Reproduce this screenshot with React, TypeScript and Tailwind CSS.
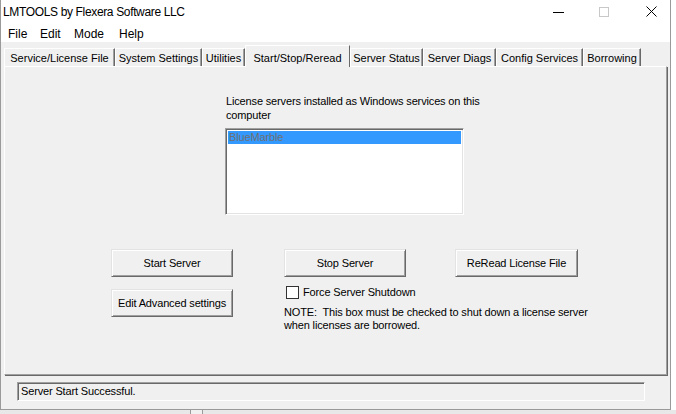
import React from "react";

const tabs: { label: string; w: string; selected?: boolean }[] = [
  { label: "Service/License File", w: "w-[111px]" },
  { label: "System Settings", w: "w-[87px]" },
  { label: "Utilities", w: "w-[43px]" },
  { label: "Start/Stop/Reread", w: "w-[105px]", selected: true },
  { label: "Server Status", w: "w-[73px]" },
  { label: "Server Diags", w: "w-[73px]" },
  { label: "Config Services", w: "w-[87px]" },
  { label: "Borrowing", w: "w-[58px]" },
];

function Btn({ children, w = "w-[122px]" }: { children: React.ReactNode; w?: string }) {
  return (
    <div
      className={`${w} h-[28px] flex items-center justify-center bg-[#f0f0f0] border-t border-l border-[#e3e3e3] border-r border-b border-r-[#696969] border-b-[#696969] shadow-[inset_1px_1px_0_#ffffff,inset_-1px_-1px_0_#a0a0a0] text-[11px] text-black`}
    >
      {children}
    </div>
  );
}

export default function App() {
  return (
    <div
      className="w-[676px] h-[414px] bg-white overflow-hidden flex flex-col"
      style={{ fontFamily: '"Liberation Sans", Arial, sans-serif' }}
    >
      <div className="w-[671px] h-[410px] shrink-0 flex flex-col border-l border-r border-b border-[#9a9a9a]">
        {/* Title bar */}
        <div className="h-[22px] bg-white flex items-center justify-between">
          <div className="pl-[2px] text-[12px] tracking-[-0.35px] text-black leading-none pt-[1px]">LMTOOLS by Flexera Software LLC</div>
          <div className="flex h-full items-center mr-[-3px]">
            <div className="w-[46px] h-full flex items-center justify-center">
              <div className="w-[11px] h-px bg-black mt-[2px]" />
            </div>
            <div className="w-[46px] h-full flex items-center justify-center">
              <div className="w-[10px] h-[10px] border border-[#c8c8c8] mt-[2px]" />
            </div>
            <div className="w-[46px] h-full flex items-center justify-center">
              <svg width="11" height="11" viewBox="0 0 11 11" className="mt-[1px] ml-[2px]">
                <path d="M0.5 0.5 L10.5 10.5 M10.5 0.5 L0.5 10.5" stroke="#000" strokeWidth="1" />
              </svg>
            </div>
          </div>
        </div>
        {/* Menu bar */}
        <div className="h-[20px] bg-white flex items-center pt-[3px] text-[12px] text-black">
          <span className="w-[32px] pl-[7px]">File</span>
          <span className="w-[34px] pl-[7px]">Edit</span>
          <span className="w-[45px] pl-[7px]">Mode</span>
          <span className="pl-[7px]">Help</span>
        </div>
        {/* Body */}
        <div className="flex-1 bg-[#f0f0f0] flex flex-col pt-[3px] pl-[3px]">
          {/* Tabs */}
          <div className="h-[21px] flex items-end relative z-10">
            {tabs.map((t) =>
              t.selected ? (
                <div
                  key={t.label}
                  className={`${t.w} h-[22px] mb-[-1px] bg-[#f0f0f0] border-l border-t border-white border-r border-r-[#696969] flex items-start justify-center pt-[4px] text-[11px] text-black`}
                >
                  {t.label}
                </div>
              ) : (
                <div
                  key={t.label}
                  className={`${t.w} h-[18px] bg-[#f0f0f0] border-l border-t border-white border-r border-r-[#696969] shadow-[inset_-1px_0_0_#a0a0a0] flex items-center justify-center pt-[2px] text-[11px] text-black`}
                >
                  {t.label}
                </div>
              )
            )}
          </div>
          {/* Panel */}
          <div className="w-[663px] h-[309px] border-l border-t border-white border-r border-b border-r-[#a0a0a0] border-b-[#a0a0a0] shadow-[1px_1px_0_#696969] flex flex-col text-[11px] tracking-[-0.15px] text-black">
            <div className="ml-[220px] mt-[27px] w-[239px] flex flex-col">
              <div className="pl-[1px] leading-[14px] whitespace-nowrap">
                License servers installed as Windows services on this
                <br />
                computer
              </div>
              <div className="mt-[6px] h-[87px] bg-white border-t border-l border-[#a0a0a0] border-r border-b border-r-white border-b-white shadow-[inset_1px_1px_0_#696969,inset_-1px_-1px_0_#e3e3e3] p-[2px]">
                <div className="h-[13px] bg-[#3399ff] text-[#707070] leading-[13px] pl-[1px]">BlueMarble</div>
              </div>
            </div>
            <div className="mt-[34px] ml-[106px] flex">
              <div className="flex flex-col gap-[12px]">
                <Btn>Start Server</Btn>
                <Btn>Edit Advanced settings</Btn>
              </div>
              <div className="ml-[51px] w-[122px] flex flex-col">
                <Btn>Stop Server</Btn>
                <div className="mt-[9px] flex items-center ml-[2px] h-[13px] whitespace-nowrap">
                  <div className="w-[13px] h-[13px] shrink-0 bg-white border border-[#333333]" />
                  <span className="ml-[4px]">Force Server Shutdown</span>
                </div>
                <div className="mt-[7px] leading-[13px] whitespace-nowrap">
                  NOTE:&nbsp; This box must be checked to shut down a license server
                  <br />
                  when licenses are borrowed.
                </div>
              </div>
              <div className="ml-[49px]">
                <Btn w="w-[123px]">ReRead License File</Btn>
              </div>
            </div>
          </div>
          {/* Status bar */}
          <div className="mt-[7px] ml-[13px] w-[628px] h-[19px] border-t border-l border-[#a0a0a0] border-r border-b border-r-white border-b-white shadow-[inset_1px_1px_0_#696969] flex items-center pl-[3px] text-[11px] tracking-[-0.15px] text-black">
            Server Start Successful.
          </div>
        </div>
      </div>
      <div className="flex-1 bg-[#e8e8e8] flex">
        <div className="w-[191px] border-r border-[#9a9a9a]" />
        <div className="w-[12px] bg-[#f0f0f0] border-r border-[#9a9a9a]" />
      </div>
    </div>
  );
}
